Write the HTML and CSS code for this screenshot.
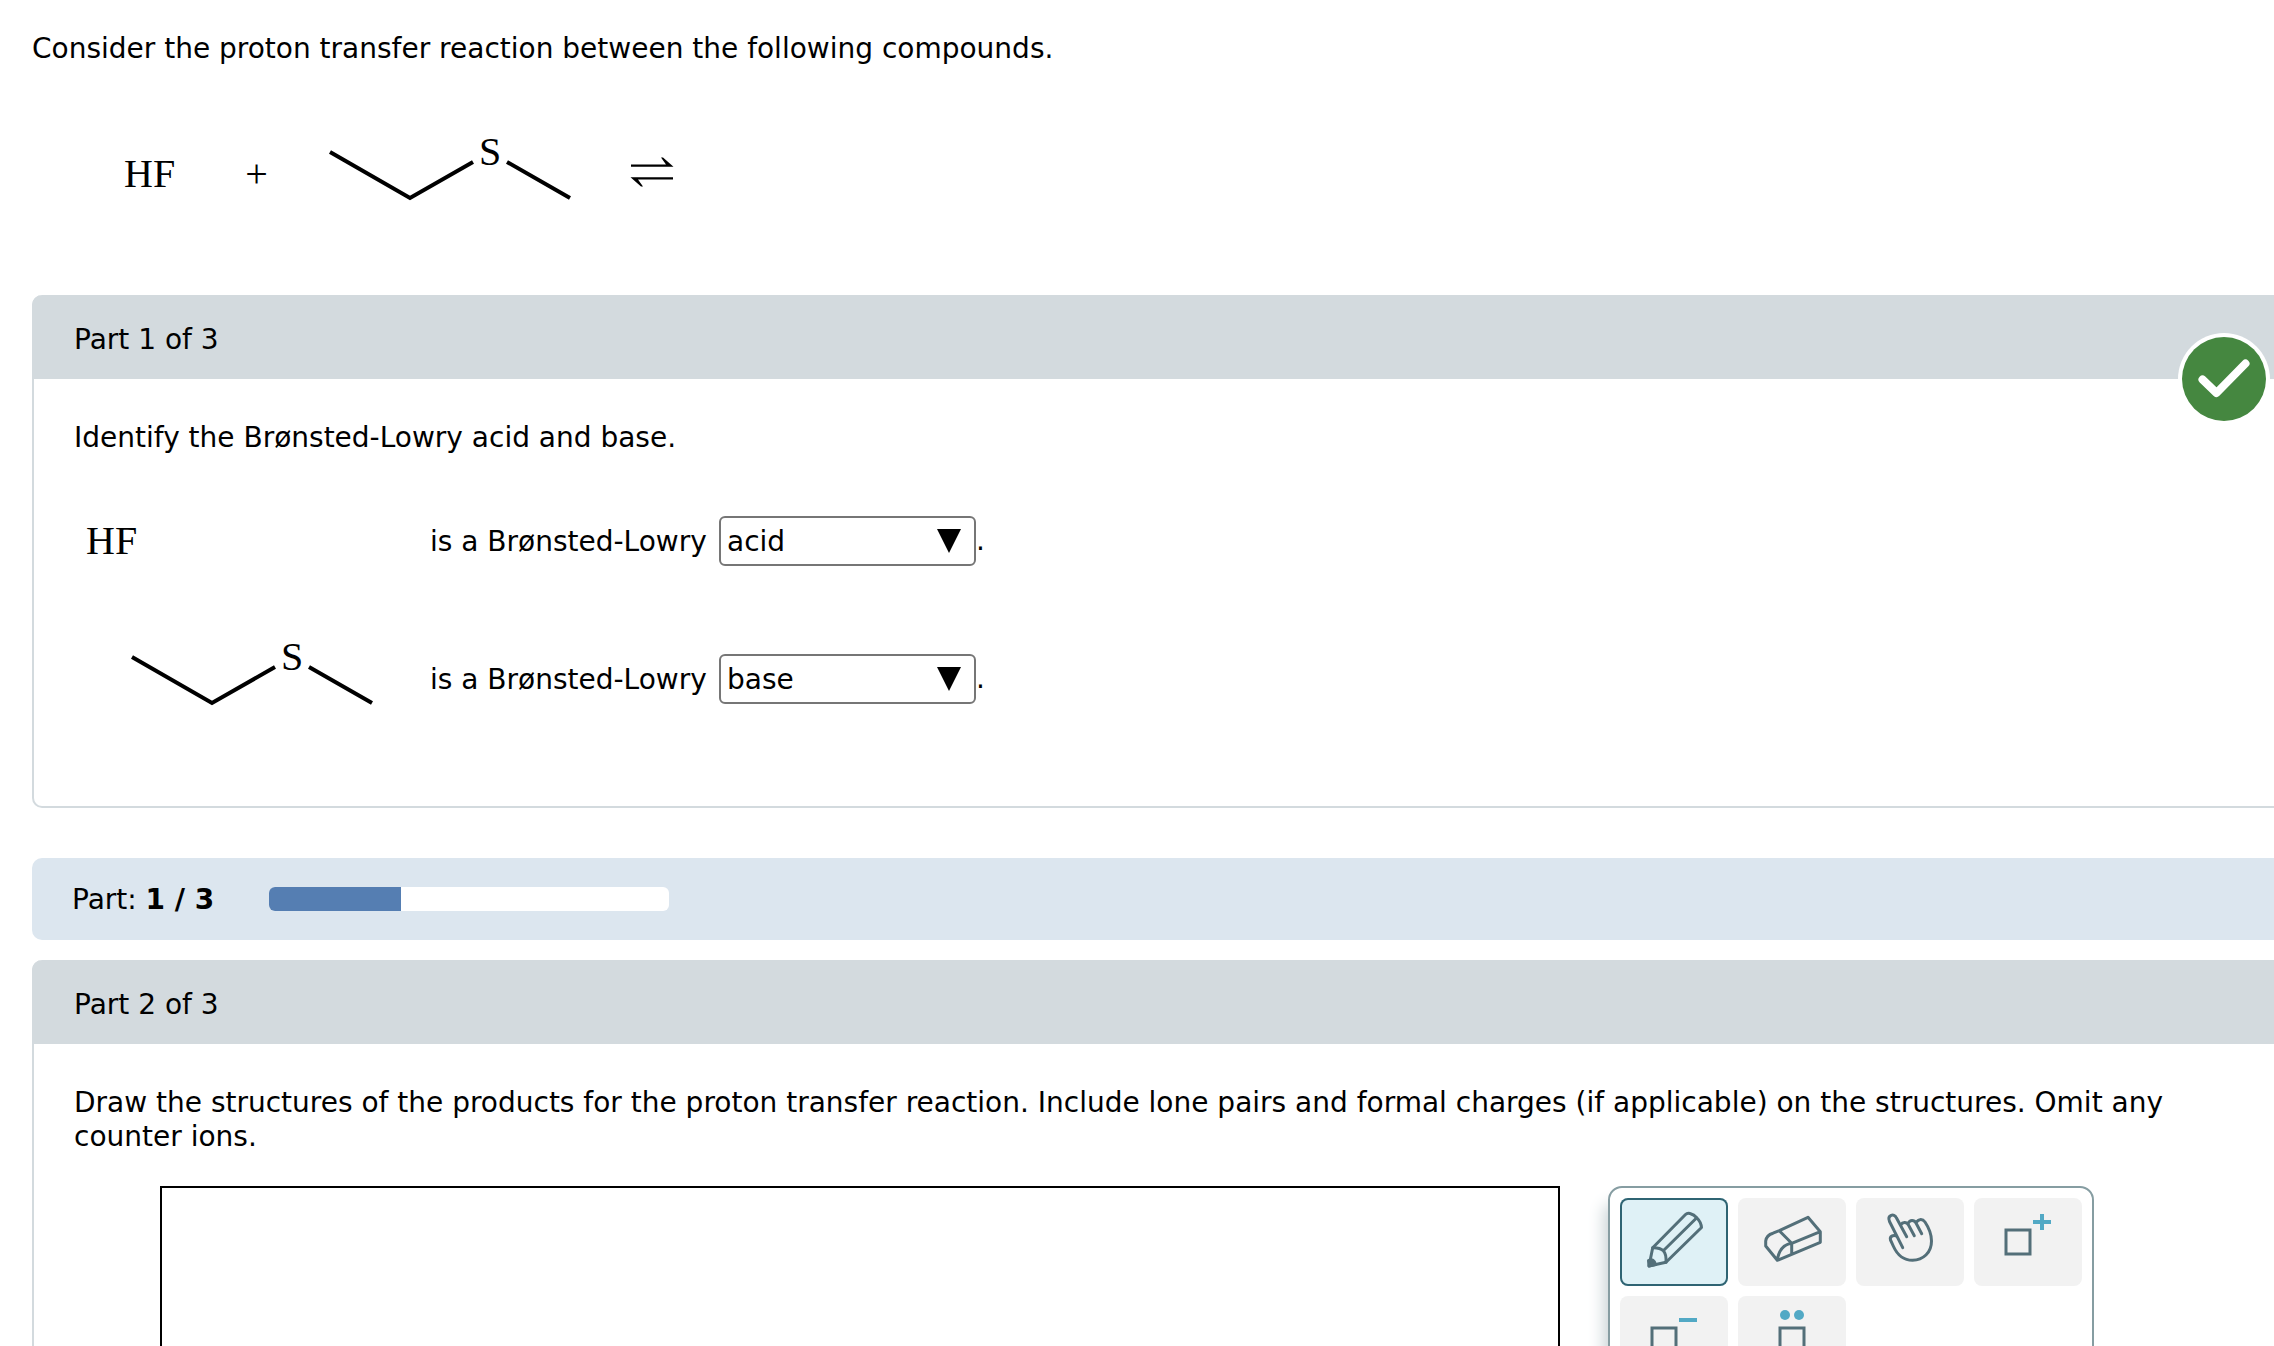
FILE: index.html
```html
<!DOCTYPE html>
<html lang="en">
<head>
<meta charset="utf-8">
<title>Proton transfer reaction</title>
<link rel="stylesheet" href="styles.css">
</head>
<body>
<main class="page">
  <p class="intro">Consider the proton transfer reaction between the following compounds.</p>

  <div class="equation">
    <span class="formula">HF</span>
    <span class="formula plus">+</span>
    <svg class="molecule" viewBox="0 -16 248 108" role="img" aria-label="ethyl methyl sulfide">
      <path class="bond" d="M4 16L84 62L147 26M181 26L244 62"/>
      <text class="atom" x="153" y="29">S</text>
    </svg>
    <svg class="arrows" viewBox="0 0 44 36" role="img" aria-label="equilibrium">
      <path d="M1 8.500H36L31 1.500H33L43.500 10.800H1Z"/>
      <path d="M43 23.500H8L13 30.500H11L0.500 21.200H43Z"/>
    </svg>
  </div>

  <section class="panel">
    <h2 class="panel-title">Part 1 of 3</h2>
    <svg class="status" viewBox="0 0 92 92" role="img" aria-label="Correct">
      <circle cx="46" cy="46" r="46" fill="#fff"/>
      <circle cx="46" cy="46" r="42" fill="#458740"/>
      <path d="M24.500 46.500L38.500 60L67.500 30.500" fill="none" stroke="#fff" stroke-width="8" stroke-linecap="round" stroke-linejoin="round"/>
    </svg>
    <div class="panel-body">
      <p>Identify the Brønsted-Lowry acid and base.</p>
      <div class="answers">
        <div class="answer">
          <div class="compound"><span class="formula">HF</span></div>
          <label for="role-hf">is a Brønsted-Lowry</label>
          <span class="picker">
            <select id="role-hf"><option selected>acid</option><option>base</option></select>
            <svg class="caret" viewBox="0 0 24 24" aria-hidden="true"><path d="M0 0H24L12 24Z"/></svg>
          </span>
          <span>.</span>
        </div>
        <div class="answer">
          <div class="compound compound-drawn">
            <svg class="molecule" viewBox="0 -16 248 108" role="img" aria-label="ethyl methyl sulfide">
              <path class="bond" d="M4 16L84 62L147 26M181 26L244 62"/>
              <text class="atom" x="153" y="29">S</text>
            </svg>
          </div>
          <label for="role-sulfide">is a Brønsted-Lowry</label>
          <span class="picker">
            <select id="role-sulfide"><option>acid</option><option selected>base</option></select>
            <svg class="caret" viewBox="0 0 24 24" aria-hidden="true"><path d="M0 0H24L12 24Z"/></svg>
          </span>
          <span>.</span>
        </div>
      </div>
    </div>
  </section>

  <div class="progress">
    <span class="progress-label">Part: <strong>1 / 3</strong></span>
    <div class="track"><div class="fill" style="width:33%"></div></div>
  </div>

  <section class="panel">
    <h2 class="panel-title">Part 2 of 3</h2>
    <div class="panel-body">
      <p>Draw the structures of the products for the proton transfer reaction. Include lone pairs and formal charges (if applicable) on the structures. Omit any counter ions.</p>
      <div class="workspace">
        <div class="canvas"></div>
        <div class="toolbox">
          <button class="tool selected" type="button" aria-label="Pencil">
            <svg viewBox="0 0 108 88">
              <path d="M32.700 49.700L65.500 16.500Q67.500 14.500 70 15.500Q74 16.500 77 20Q81 24 81.500 29.500L46 64.300L29 68Z"/>
              <path d="M32.700 49.700Q40 49.500 43.300 52.700Q46.500 56 46 64.300M43.300 52.700L76.500 20"/>
              <path class="solid" d="M28.500 62.500Q34 60 35.500 66.500L29 68Z"/>
            </svg>
          </button>
          <button class="tool" type="button" aria-label="Eraser">
            <svg viewBox="0 0 108 88">
              <path d="M41.300 32.700L70 19.300L82.300 33.700V44.300L39.300 62.300L27.700 48V43Q28.500 37 35 35.200ZM41.300 32.700L53.700 45.300V55.500M82.300 33.700L53.700 45.300Q41.500 47 39.300 62.300"/>
            </svg>
          </button>
          <button class="tool" type="button" aria-label="Move">
            <svg viewBox="0 0 108 88">
              <path d="M46.700 49.700L33.500 23.500C31 17.500 38 14.500 40.500 20L50.700 38.700M44.700 27C46.500 24 50.500 23.500 52.500 27L58.300 37.700M52 25.500C54 21.500 58 21.500 60 25L65.700 35.700M60 24.500C63 20.500 66.500 20.500 69 24C73 30 75.500 36 75.500 43C75.500 55 67 62 56.500 62.300C45 62.300 40 54 37.500 48.500L34.500 42C33.500 38.500 37 36.500 40.500 38"/>
            </svg>
          </button>
          <button class="tool" type="button" aria-label="Add positive charge">
            <svg viewBox="0 0 108 88">
              <rect x="32" y="32" width="24" height="24"/>
              <path class="accent" d="M59 24H77M68 16V32"/>
            </svg>
          </button>
          <button class="tool" type="button" aria-label="Add negative charge">
            <svg viewBox="0 0 108 88">
              <rect x="32" y="32" width="24" height="24"/>
              <path class="accent" d="M59 24H77"/>
            </svg>
          </button>
          <button class="tool" type="button" aria-label="Add lone pair">
            <svg viewBox="0 0 108 88">
              <rect x="42" y="32" width="24" height="24"/>
              <circle class="dot" cx="47" cy="19" r="5"/>
              <circle class="dot" cx="61" cy="19" r="5"/>
            </svg>
          </button>
        </div>
      </div>
    </div>
  </section>
</main>
</body>
</html>
```
FILE: styles.css
```css
* {
  box-sizing: border-box;
}

body {
  margin: 0;
  background: #fff;
  color: #000;
  font-family: Verdana, "DejaVu Sans", sans-serif;
  font-size: 28px;
  line-height: 34px;
}

p,
h2 {
  margin: 0;
}

svg {
  display: block;
  flex: none;
}

.page {
  height: 100vh;
  padding: 32px 0 0 32px;
  overflow: hidden;
}

.equation {
  display: flex;
  align-items: center;
  margin: 54px 0 67px;
  padding-left: 92px;
}

.formula {
  font-family: "Times New Roman", "Liberation Serif", serif;
  font-size: 40px;
  line-height: 46px;
}

.plus {
  margin: 0 58px 0 70px;
}

.molecule {
  width: 248px;
  height: 108px;
}

.bond {
  fill: none;
  stroke: #000;
  stroke-width: 4;
}

.atom {
  font-family: "Times New Roman", "Liberation Serif", serif;
  font-size: 40px;
}

.arrows {
  width: 44px;
  height: 36px;
  margin-left: 56px;
}

.panel {
  position: relative;
  border: 2px solid #d3dade;
  border-width: 0 0 2px 2px;
  border-radius: 10px 0 0 10px;
}

.panel-title {
  margin-left: -2px;
  padding: 28px 42px 22px;
  background: #d3dade;
  border-radius: 10px 0 0 0;
  font-size: inherit;
  font-weight: 400;
}

.status {
  position: absolute;
  top: 38px;
  right: 4px;
  width: 92px;
  height: 92px;
}

.panel-body {
  padding: 42px 40px 58px;
}

.answers {
  margin-top: 17px;
}

.answer {
  display: flex;
  align-items: center;
  height: 138px;
}

.answer label {
  width: 281px;
  padding-top: 2px;
}

.compound {
  width: 356px;
  padding-left: 12px;
}

.compound-drawn {
  padding-left: 54px;
}

.picker {
  position: relative;
  margin-left: 8px;
}

.picker select {
  display: block;
  width: 257px;
  height: 50px;
  padding: 2px 6px 0;
  appearance: none;
  background: #fff;
  border: 2px solid #767676;
  border-radius: 6px;
  color: inherit;
  font: inherit;
}

.caret {
  position: absolute;
  top: 13px;
  right: 15px;
  width: 24px;
  height: 24px;
  pointer-events: none;
}

.progress {
  display: flex;
  align-items: center;
  gap: 40px;
  height: 82px;
  margin: 50px 0 20px;
  padding-left: 40px;
  background: #dce6ef;
  border-radius: 10px 0 0 10px;
}

.progress-label {
  width: 157px;
  padding-top: 2px;
}

.track {
  width: 400px;
  height: 24px;
  overflow: hidden;
  background: #fff;
  border-radius: 6px;
}

.fill {
  height: 100%;
  background: #557eb2;
}

.workspace {
  display: flex;
  gap: 48px;
  margin: 32px 140px 0 86px;
}

.canvas {
  flex: 1;
  height: 600px;
  border: 2px solid #000;
}

.toolbox {
  display: grid;
  grid-template-columns: repeat(4, 108px);
  grid-auto-rows: 88px;
  gap: 10px;
  padding: 10px;
  background: #fff;
  border: 2px solid #869da2;
  border-radius: 14px;
  box-shadow: -10px 12px 16px -6px #c9d3d6;
}

.tool {
  padding: 0;
  background: #f2f2f2;
  border: 0;
  border-radius: 8px;
}

.tool.selected {
  background: #dff1f6;
  box-shadow: inset 0 0 0 2px #2f6473;
}

.tool svg {
  width: 108px;
  height: 88px;
  fill: none;
  stroke: #536f79;
  stroke-width: 3;
  stroke-linejoin: round;
  stroke-linecap: round;
}

.tool rect {
  stroke-linejoin: miter;
}

.tool .solid {
  fill: #536f79;
}

.tool .accent {
  stroke: #52a9c5;
  stroke-width: 4;
  stroke-linecap: butt;
}

.tool .dot {
  fill: #52a9c5;
  stroke: none;
}
```
